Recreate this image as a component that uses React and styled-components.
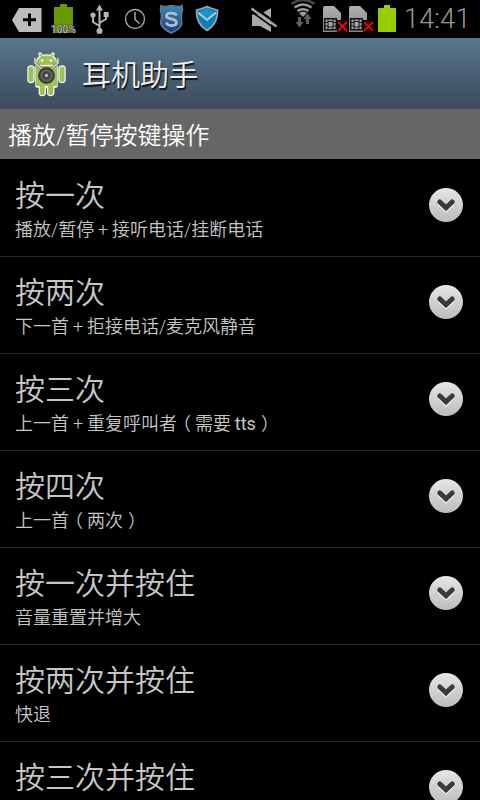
import styled, { createGlobalStyle } from "styled-components";

const presses = [
  { title: "按一次", detail: "播放/暂停 + 接听电话/挂断电话" },
  { title: "按两次", detail: "下一首 + 拒接电话/麦克风静音" },
  { title: "按三次", detail: "上一首 + 重复呼叫者（需要 tts）" },
  { title: "按四次", detail: "上一首（两次）" },
  { title: "按一次并按住", detail: "音量重置并增大" },
  { title: "按两次并按住", detail: "快退" },
  { title: "按三次并按住", detail: "" },
];

const StatusIcons = () => (
  <svg width="400" height="38" viewBox="0 0 400 38">
    <defs>
      <linearGradient id="shieldS" x1="0" y1="0" x2="0" y2="1">
        <stop offset="0" stopColor="#2e8dba" />
        <stop offset="1" stopColor="#173c92" />
      </linearGradient>
      <linearGradient id="sim" x1="0" y1="0" x2="0" y2="1">
        <stop offset="0" stopColor="#b0b0b0" />
        <stop offset="1" stopColor="#858585" />
      </linearGradient>
    </defs>

    {/* add tag */}
    <path d="M12 20L19 8H41.500V32H19Z" fill="#bcbcbc" />
    <path d="M29.500 13.500V26M23 19.700H36" stroke="#000" strokeWidth="3" />

    {/* battery with percentage */}
    <path d="M54 7H60V4H67V7H73V33H54Z" fill="#669800" />
    <text
      x="63.300"
      y="32.700"
      textAnchor="middle"
      fontFamily="Roboto, sans-serif"
      fontSize="10"
      fontWeight="500"
      textLength="25"
      fill="#b8b8b8"
      stroke="#333"
      strokeWidth="1"
      paintOrder="stroke"
    >
      100%
    </text>

    {/* usb */}
    <g stroke="#b4b4b4" fill="none" strokeWidth="2">
      <path d="M99.500 9V30M99.500 26L93 22V16M99.500 23L106 19V14" />
    </g>
    <g fill="#b4b4b4">
      <path d="M99.500 4.500L103 10.500H96Z" />
      <circle cx="93" cy="15" r="2.600" />
      <rect x="103.700" y="12" width="5" height="5" />
      <circle cx="99.500" cy="31" r="3" />
    </g>

    {/* alarm clock */}
    <circle cx="135" cy="19" r="9.500" fill="none" stroke="#aaa" strokeWidth="1.300" />
    <path d="M135 12V19.500L139.300 23.500" fill="none" stroke="#aaa" strokeWidth="1.500" />

    {/* S shield */}
    <path
      d="M161 5.500Q164 7.500 171.500 5.500Q179 7.500 182 5.500L182.500 10Q180.500 16 182 23Q181 29 171.500 33Q162 29 160.500 23Q162.500 16 160.500 10Z"
      fill="url(#shieldS)"
      stroke="#74787c"
      strokeWidth="1.500"
    />
    <path
      d="M176.500 15.500C175.500 12.500 166.500 12 166.500 16C166.500 20 176.500 17.500 176.500 22.500C176.500 26.500 167.500 26.500 166.300 22.700"
      fill="none"
      stroke="#bcbcbc"
      strokeWidth="2.800"
    />

    {/* blue guard shield */}
    <path
      d="M207 6.500Q212 9 217.500 10Q218.500 23 207 30.500Q195.500 23 196.500 10Q202 9 207 6.500Z"
      fill="#087fb7"
      stroke="#a2a8aa"
      strokeWidth="1.500"
    />
    <path d="M199 13L207 8L215 13L207 21Z" fill="#1595cb" />
    <path d="M198 12.500L207 20L216 12.500" fill="none" stroke="#b9c8ce" strokeWidth="2" />

    {/* muted speaker */}
    <path d="M252 14.500H260L271 8V32L260 26H252Z" fill="#aaa" />
    <path d="M253 6.500L278 24.500" stroke="#000" strokeWidth="2.500" />
    <path d="M251.500 8.500L276.500 26.500" stroke="#aaa" strokeWidth="2.300" />
    <path d="M250.500 11L275 28.700" stroke="#000" strokeWidth="1.500" />

    {/* wifi */}
    <g fill="none" strokeWidth="2.600">
      <path d="M291.500 4Q303 -4 314.500 4" stroke="#484848" />
      <path d="M294.500 7.500Q303 1.500 311.500 7.500" stroke="#9a9a9a" />
      <path d="M297.500 11Q303 7.500 308.500 11" stroke="#9a9a9a" />
    </g>
    <path d="M299 13Q303 10.500 307 13L303 17Z" fill="#9a9a9a" />
    <path
      d="M298 17H301V22H303.500L299.500 27.500L295.500 22H298ZM306 24V19H303.500L307.500 13.500L311.500 19H309V24Z"
      fill="#606060"
    />

    {/* sim cards */}
    {[0, 26].map((shift) => (
      <g key={shift} transform={`translate(${shift} 0)`}>
        <path d="M323 8Q323 6 325 6H334L341 13V32H323Z" fill="url(#sim)" />
        <rect x="324" y="18" width="13" height="12.500" fill="#111" />
        <rect x="325.500" y="19.500" width="10" height="9.500" fill="#aaa" />
        <path
          d="M328 19V30M333 19V30M325 22.500H328M325 26H328M333 22.500H336M333 26H336M328 21.500H333M328 27H333"
          stroke="#111"
          strokeWidth="1"
        />
        <path d="M337 20H349V32H337Z" fill="#000" />
        <path d="M338 22L347 31M347 22L338 31" stroke="#f00000" strokeWidth="2" />
      </g>
    ))}

    {/* battery */}
    <path d="M378 8H384V5H390V8H396V32H378Z" fill="#96cc00" />
  </svg>
);

const AppIcon = () => (
  <svg width="40" height="46" viewBox="0 0 40 46">
    <defs>
      <radialGradient id="speaker">
        <stop offset="0" stopColor="#ddd" />
        <stop offset=".18" stopColor="#999" />
        <stop offset=".3" stopColor="#333" />
        <stop offset=".65" stopColor="#666" />
        <stop offset="1" stopColor="#252525" />
      </radialGradient>
    </defs>
    <g stroke="#f3f5ee" strokeWidth="3.500" strokeLinecap="round" strokeLinejoin="round" fill="#f3f5ee">
      <path d="M13 3L15 6M26 3L24 6" />
      <path d="M10 13Q10.500 5 19.500 5Q28.500 5 29 13Z" />
      <path d="M10 15H29V35H10Z" />
      <path d="M15.300 35V41.500M23.700 35V41.500" strokeWidth="7.500" />
      <path d="M4 18V28.500M35 18V28.500" strokeWidth="7.500" />
    </g>
    <g stroke="#a0c254" strokeLinecap="round" strokeLinejoin="round" fill="#a0c254">
      <path d="M13 3L15 6M26 3L24 6" strokeWidth="1.500" />
      <path d="M10 13Q10.500 5 19.500 5Q28.500 5 29 13Z" />
      <path d="M10 16H29V34H10Z" strokeWidth="2" />
      <path d="M15.300 34V41.500M23.700 34V41.500M4 18V28.500M35 18V28.500" strokeWidth="5" />
    </g>
    <circle cx="15" cy="9.500" r="1.200" fill="#fff" />
    <circle cx="24" cy="9.500" r="1.200" fill="#fff" />
    <path d="M8 7V12L16 19M31 7V12L23 19" fill="none" stroke="#65705e" strokeWidth="2.600" />
    <path d="M8 7V12L16 19M31 7V12L23 19" fill="none" stroke="#dedede" strokeWidth="1.400" />
    <circle cx="19.500" cy="24.500" r="8" fill="url(#speaker)" stroke="#393b38" strokeWidth=".8" />
  </svg>
);

const Chevron = () => (
  <svg width="20" height="16" viewBox="0 0 20 16">
    <path d="M3.500 5L10 11L16.500 5" fill="none" stroke="#fff" strokeWidth="5" transform="translate(0 1)" />
    <path
      d="M3.800 5L10 10.800L16.200 5"
      fill="none"
      stroke="#3a3a3a"
      strokeWidth="5"
      strokeLinecap="round"
    />
  </svg>
);

// Full-width brackets are nudged to the middle of their cell
const Detail = ({ text }) => (
  <RowDetail>
    {text.split(/([（）]|[a-z]+)/).map((part, i) => {
      if (/[（）]/.test(part)) {
        return (
          <Bracket key={i} $nudge={part === "（" ? -4 : 5}>
            {part}
          </Bracket>
        );
      }
      return /[a-z]/.test(part) ? <Latin key={i}>{part}</Latin> : part;
    })}
  </RowDetail>
);

const App = () => {
  return (
    <>
      <GlobalStyle />
      <Screen>
        <StatusBar>
          <StatusIcons />
          <Clock>14:41</Clock>
        </StatusBar>
        <TitleBar>
          <AppIcon />
          <AppTitle>耳机助手</AppTitle>
        </TitleBar>
        <SectionHeader>播放/暂停按键操作</SectionHeader>
        <List>
          {presses.map(({ title, detail }) => (
            <Row key={title}>
              <RowText>
                <RowTitle>{title}</RowTitle>
                {detail && <Detail text={detail} />}
              </RowText>
              <MoreButton aria-label={title}>
                <Chevron />
              </MoreButton>
            </Row>
          ))}
        </List>
      </Screen>
    </>
  );
};

const GlobalStyle = createGlobalStyle`
  * {
    box-sizing: border-box;
    margin: 0;
    padding: 0;
  }

  body {
    background: #000;
    overflow: hidden;
  }

  svg {
    display: block;
    flex-shrink: 0;
  }
`;

const Screen = styled.div`
  display: flex;
  flex-direction: column;
  width: 480px;
  height: 800px;
  overflow: hidden;
  background: #000;
  color: #c6c6c6;
  font-family: Roboto, "Noto Sans CJK SC", sans-serif;
  font-weight: 350;
`;

const StatusBar = styled.div`
  display: flex;
  flex-shrink: 0;
  height: 38px;
`;

const Clock = styled.time`
  padding-left: 4px;
  color: #969696;
  font-size: 27px;
  font-weight: 300;
  line-height: 38px;
  letter-spacing: 0.2px;
  white-space: nowrap;
`;

const TitleBar = styled.header`
  display: flex;
  flex-shrink: 0;
  align-items: center;
  gap: 15px;
  height: 71px;
  padding: 1px 0 0 27px;
  background: linear-gradient(#58768c, #3c4c5e);
  border-bottom: 1px solid #40586b;
`;

const AppTitle = styled.h1`
  padding-top: 4px;
  color: #f0f0f0;
  font-size: 29px;
  font-weight: 350;
  line-height: 40px;
  text-shadow: 1px 2px 1px #111;
`;

const SectionHeader = styled.h2`
  flex-shrink: 0;
  height: 50px;
  padding-left: 8px;
  background: #666;
  color: #fff;
  font-size: 24px;
  font-weight: 350;
  line-height: 55px;
`;

const List = styled.ul`
  padding-top: 1px;
  list-style: none;
`;

const Row = styled.li`
  display: flex;
  align-items: flex-start;
  justify-content: space-between;
  height: 97px;
  padding: 12px 17px 0 15px;
  border-bottom: 1px solid #292929;
`;

const RowText = styled.div`
  display: flex;
  flex-direction: column;
  padding-top: 5px;
`;

const RowTitle = styled.h3`
  font-size: 30px;
  font-weight: 350;
  line-height: 38px;
`;

const RowDetail = styled.p`
  font-size: 18px;
  line-height: 30px;
  word-spacing: -0.5px;
  white-space: nowrap;
`;

const Bracket = styled.span`
  display: inline-block;
  line-height: 1;
  transform: translateX(${({ $nudge }) => $nudge}px);
`;

const Latin = styled.span`
  font-weight: 400;
`;

const MoreButton = styled.button`
  display: flex;
  align-items: center;
  justify-content: center;
  width: 34px;
  height: 34px;
  margin-top: 16px;
  border: 0;
  border-radius: 50%;
  background: linear-gradient(#e6e6e6, #bcbcbc);
`;

export default App;
